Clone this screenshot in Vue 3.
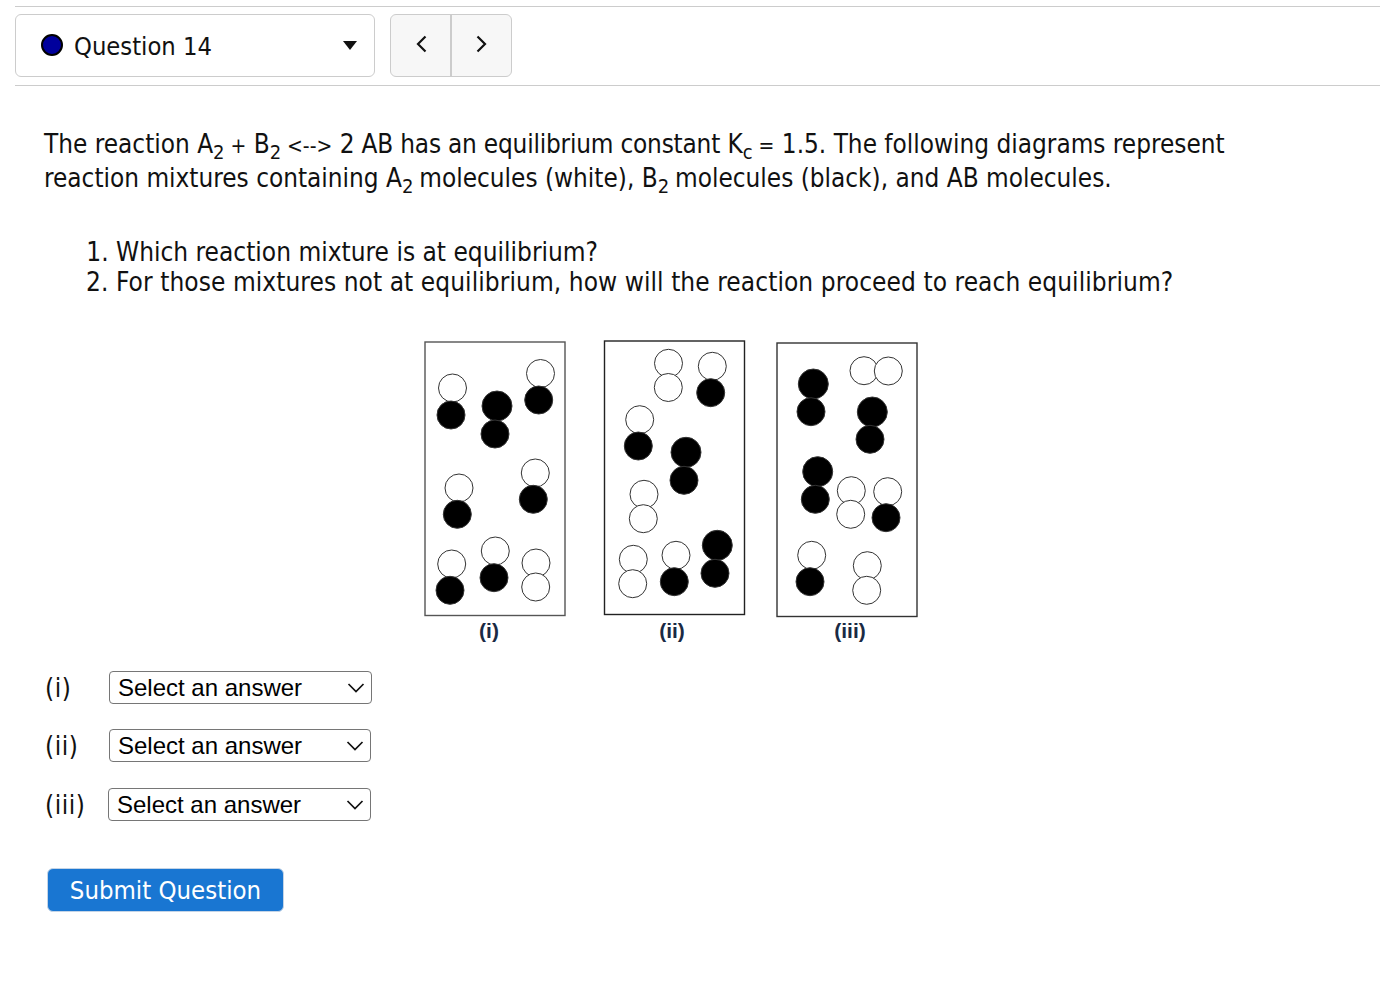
<template>
  <div class="page">
    <div class="top-bar">
      <div class="question-picker">
        <span class="status-dot"></span>
        <span class="question-name">Question 14</span>
        <span class="caret"></span>
      </div>
      <div class="nav-buttons">
        <button class="nav-btn">
          <svg width="12" height="18" viewBox="0 0 12 18"><path d="M10.5 1.5 3 9l7.5 7.5" fill="none" stroke="#111" stroke-width="2.2" /></svg>
        </button>
        <button class="nav-btn">
          <svg width="12" height="18" viewBox="0 0 12 18"><path d="M1.5 1.5 9 9l-7.5 7.5" fill="none" stroke="#111" stroke-width="2.2" /></svg>
        </button>
      </div>
    </div>

    <div class="question">
      <p class="intro">
        The reaction A<sub>2</sub> <span class="sym">+</span> B<sub>2</sub> <span class="sym">&lt;--&gt;</span> <span class="tight">2 AB has an equilibrium constant</span> K<sub>c</sub> <span class="sym">=</span> 1.5. The following diagrams represent<br />
        reaction mixtures containing A<sub>2</sub> molecules (white), B<sub>2</sub> molecules (black), and AB molecules.
      </p>
      <ol class="tasks">
        <li>Which reaction mixture is at equilibrium?</li>
        <li>For those mixtures not at equilibrium, how will the reaction proceed to reach equilibrium?</li>
      </ol>

      <svg class="diagram" width="510" height="310" viewBox="420 335 510 310">
        <g v-for="box in boxes" :key="box.label">
          <rect :x="box.x" :y="box.y" width="140" height="273.5" fill="#fff" :stroke="box.stroke" stroke-width="1.4" />
          <circle
            v-for="(atom, i) in box.atoms"
            :key="i"
            :cx="atom[0]"
            :cy="atom[1]"
            :r="atom[3] || 14"
            :fill="atom[2] ? '#000' : '#fff'"
            stroke="#333"
            stroke-width="1"
          />
          <text class="box-label" :x="box.labelX" y="638" text-anchor="middle">{{ box.label }}</text>
        </g>
      </svg>

      <div class="answers">
        <div v-for="row in rows" :key="row.label" class="answer-row" :class="row.cls">
          <span class="answer-label">{{ row.label }}</span>
          <div class="select-wrap">
            <select class="answer-select">
              <option>Select an answer</option>
            </select>
            <svg class="chevron" width="18" height="12" viewBox="0 0 18 12"><path d="M1.5 2 9 9.5 16.5 2" fill="none" stroke="#111" stroke-width="1.7" /></svg>
          </div>
        </div>
      </div>

      <button class="submit-btn">Submit Question</button>
    </div>
  </div>
</template>

<script setup>
const W = 0
const B = 1

const boxes = [
  {
    label: '(i)', x: 425, y: 342, labelX: 489, stroke: '#555',
    atoms: [
      [452.5, 388, W], [451, 415, B],
      [497, 406, B, 15], [495, 434, B],
      [540.5, 373.5, W], [538.7, 400, B],
      [459, 488, W], [457.3, 514.3, B],
      [535.3, 473, W], [533.3, 499.3, B],
      [451.7, 564, W], [450, 590.3, B],
      [495.3, 551, W], [494, 577.7, B],
      [536, 563, W], [535.7, 587, W]
    ]
  },
  {
    label: '(ii)', x: 604.5, y: 341, labelX: 672, stroke: '#222',
    atoms: [
      [668.5, 363.3, W], [668.3, 387.5, W],
      [712.3, 366.3, W], [710.7, 392.7, B],
      [639.7, 419.7, W], [638.3, 446, B],
      [686, 452.3, B, 15], [684, 480.3, B],
      [644, 494.3, W], [643.3, 518.7, W],
      [633.3, 559.3, W], [632.7, 583.7, W],
      [676, 555.3, W], [674.3, 581.7, B],
      [717.3, 545.3, B, 15], [715, 573.3, B]
    ]
  },
  {
    label: '(iii)', x: 777, y: 343, labelX: 850, stroke: '#333',
    atoms: [
      [813.3, 384, B, 15], [811, 411.7, B],
      [864, 370.7, W], [888.3, 371, W],
      [872.3, 412, B, 15], [870, 439.3, B],
      [817.7, 471.7, B, 15], [815.3, 499.3, B],
      [851.3, 490.7, W], [850.7, 514.3, W],
      [887.7, 491.7, W], [886, 517.7, B],
      [811.7, 555.3, W], [810, 581.7, B],
      [867.3, 565.7, W], [866.7, 590.3, W]
    ]
  }
]

const rows = [
  { label: '(i)', cls: 'row-first' },
  { label: '(ii)', cls: 'row-second' },
  { label: '(iii)', cls: 'row-third' }
]
</script>

<style>
body {
  background: #fff;
}
</style>

<style scoped>
.page {
  font-family: "DejaVu Sans Condensed", "DejaVu Sans", sans-serif;
  color: #111;
  padding: 6px 0 0 15px;
  height: 991px;
  overflow: hidden;
}

.top-bar {
  display: flex;
  gap: 15px;
  height: 63px;
  padding: 7px 0 8px;
  border-top: 1px solid #ccc;
  border-bottom: 1px solid #ccc;
}

.question-picker {
  width: 360px;
  box-sizing: border-box;
  display: flex;
  align-items: center;
  padding: 0 17px 0 25px;
  background: #fff;
  border: 1px solid #ccc;
  border-radius: 6px;
}

.status-dot {
  width: 18px;
  height: 18px;
  background: #00009c;
  border: 2px solid #000;
  border-radius: 50%;
  margin-right: 11px;
  margin-top: -2px;
}

.question-name {
  flex: 1;
  font-size: 25.3px;
  padding-top: 1px;
}

.caret {
  width: 0;
  height: 0;
  border-left: 7px solid transparent;
  border-right: 7px solid transparent;
  border-top: 9px solid #111;
  margin-top: -1px;
}

.nav-buttons {
  width: 122px;
  display: flex;
  box-sizing: border-box;
  border: 1px solid #ccc;
  border-radius: 6px;
  background: #f7f7f7;
}

.nav-btn {
  flex: 1;
  border: none;
  background: none;
  padding: 0 0 4px;
  display: flex;
  align-items: center;
  justify-content: center;
}

.nav-btn:first-child {
  border-right: 2px solid #ccc;
}

.question {
  padding-left: 29px;
}

.intro {
  margin: 41px 0 0;
  font-size: 25.9px;
  line-height: 34px;
}

.intro sub {
  font-size: 20px;
  line-height: 0;
  letter-spacing: -1.5px;
}

.sym {
  font-size: 21px;
  line-height: 0;
}

.tight {
  letter-spacing: -0.2px;
}

.tasks {
  margin: 42px 0 0;
  padding-left: 72px;
  font-size: 26px;
  line-height: 30px;
}

.tasks li + li {
  letter-spacing: 0.07px;
}

.diagram {
  display: block;
  margin: 38px 0 0 376px;
}

.box-label {
  font-family: "Liberation Sans", sans-serif;
  font-weight: 700;
  font-size: 21px;
  fill: #1a2a44;
}

.answers {
  margin-top: 26px;
  display: flex;
  flex-direction: column;
}

.answer-row {
  display: flex;
  align-items: center;
  height: 33px;
}

.row-second {
  margin-top: 25px;
}

.row-third {
  margin-top: 26px;
}

.answer-label {
  width: 64px;
  font-size: 26px;
  letter-spacing: 0.5px;
  margin-left: 1px;
}

.select-wrap {
  position: relative;
  width: 263px;
  height: 33px;
}

.row-second .select-wrap {
  width: 262px;
}

.row-third .select-wrap {
  width: 263px;
  margin-left: -1px;
}

.answer-select {
  appearance: none;
  width: 100%;
  height: 100%;
  box-sizing: border-box;
  padding: 0 8px;
  background: #fff;
  border: 1px solid #767676;
  border-radius: 4px;
  font-family: "Liberation Sans", Arial, sans-serif;
  font-size: 24px;
  color: #000;
}

.chevron {
  position: absolute;
  right: 7px;
  top: 11px;
  pointer-events: none;
}

.submit-btn {
  display: block;
  width: 237px;
  height: 44px;
  margin: 47px 0 0 3px;
  padding: 0;
  background: #1976d2;
  border: 1px solid #c4d4e6;
  border-radius: 6px;
  color: #fff;
  font-family: "DejaVu Sans Condensed", "DejaVu Sans", sans-serif;
  font-size: 25.5px;
}
</style>
